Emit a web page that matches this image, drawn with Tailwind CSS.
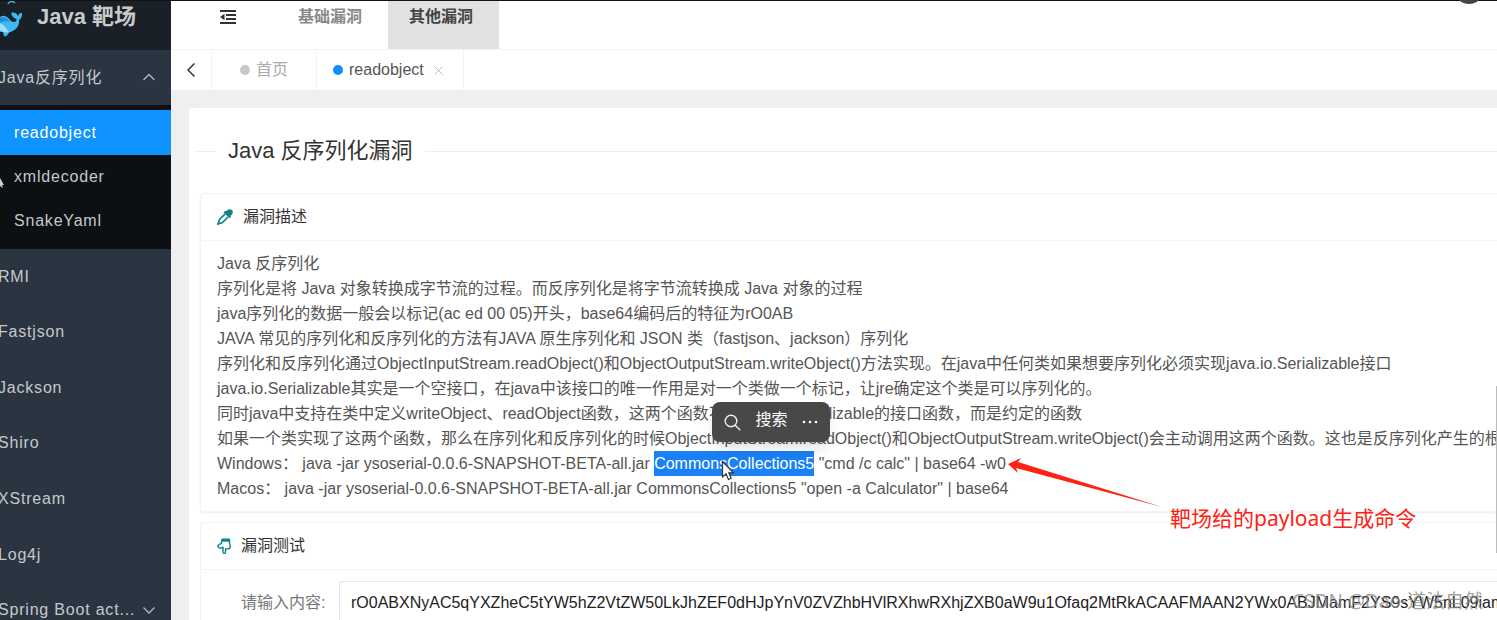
<!DOCTYPE html>
<html lang="zh-CN">
<head>
  <meta charset="UTF-8">
  <meta name="viewport" content="width=device-width, initial-scale=1.0">
  <title>Java 靶场</title>
  <script src="https://cdn.jsdelivr.net/npm/@tailwindcss/browser@4"></script>
</head>
<body class="relative h-screen overflow-hidden bg-[#efefef] font-['Liberation_Sans','Noto_Sans_CJK_SC',sans-serif] text-base text-[#555]">
  <div class="flex h-screen border-t border-[#111]">

    <!-- Sidebar -->
    <aside class="w-[171px] shrink-0 overflow-hidden bg-[#2a3541] tracking-wider text-[#c5c8cb]">
      <div class="flex h-[49px] items-start bg-[#192027]">
        <svg class="h-9 w-[23px] shrink-0" viewBox="0 0 23 36">
          <path d="M0 16C4 13 8 16 11 20C14 22 17 21 16.500 18C13 17 11 14 11.500 11.500C14 11 17 12 18 15C18.500 13 20 11.500 22 12C22.500 15 21 18 19 19C20 25 15 30 9 31.500C8 34 6 36 4 35L3 31H0Z" fill="#3fb8f2"/>
          <path d="M0 22C3 23 6 27 9 31C6 32 3 31 0 29Z" fill="#a4dcf6"/>
          <path d="M0 17C4 15 8 18 10 21C6 20 3 20 0 22Z" fill="#1f90cf"/>
          <path d="M8 3C9 0 13 0 15 2" fill="none" stroke="#3fb0ea" stroke-width="1.500"/>
        </svg>
        <h1 class="ml-[14px] text-[22px] leading-8 font-bold tracking-normal whitespace-nowrap text-[#c9c9c9]">Java 靶场</h1>
      </div>
      <nav>
        <button class="flex h-[55px] w-full items-center justify-between pr-4 tracking-wider">
          <span class="-ml-[2px] whitespace-nowrap">Java反序列化</span>
          <svg class="h-3 w-3" viewBox="0 0 12 12" fill="none" stroke="#b5b9bd" stroke-width="1.3"><path d="M0.500 8L6 2.500L11.500 8"/></svg>
        </button>
        <div class="relative h-36 bg-[#0c1013] pt-[5px]">
          <a href="#" class="block h-[45px] bg-[#0f94ff] pl-[14px] leading-[45px] text-white">readobject</a>
          <a href="#" class="block h-[44px] pl-[14px] leading-[44px]">xmldecoder</a>
          <a href="#" class="block h-[44px] pl-[14px] leading-[44px]">SnakeYaml</a>
          <svg class="absolute top-[71px] left-0 h-3 w-[5px]" viewBox="0 0 5 12"><path d="M0 2L4 9L2 9L3 12L0 10Z" fill="#ccc"/></svg>
        </div>
        <div class="-ml-[2px] grid h-[389px] grid-rows-7 items-center">
          <a href="#">RMI</a>
          <a href="#">Fastjson</a>
          <a href="#">Jackson</a>
          <a href="#">Shiro</a>
          <a href="#">XStream</a>
          <a href="#">Log4j</a>
          <a href="#" class="flex items-center justify-between pr-4 whitespace-nowrap">Spring Boot act...
            <svg class="h-3 w-3 shrink-0" viewBox="0 0 12 12" fill="none" stroke="#b5b9bd" stroke-width="1.3"><path d="M0.500 3.500L6 9L11.500 3.500"/></svg>
          </a>
        </div>
      </nav>
    </aside>

    <div class="flex min-w-0 flex-1 flex-col">
      <!-- Top menu -->
      <header class="flex h-[49px] shrink-0 border-b border-[#f3f3f3] bg-white font-bold">
        <button class="ml-[49px] flex w-[78px] items-start pt-[9px]" aria-label="menu">
          <svg class="h-[14px] w-4" viewBox="0 0 16 14" fill="#333"><path d="M0 0H16V2H0ZM6 4H16V6H6ZM6 8H16V10H6ZM0 12H16V14H0ZM0 7L4.500 3.800V10.200Z"/></svg>
        </button>
        <a href="#" class="h-12 w-[90px] leading-8 text-[#888]">基础漏洞</a>
        <a href="#" class="h-12 w-[111px] bg-[#e1e1e1] pl-[21px] leading-8 text-[#444]">其他漏洞</a>
      </header>

      <!-- Page tabs -->
      <div class="flex h-10 shrink-0 items-stretch bg-white">
        <button class="flex w-[41px] items-center justify-center border-r border-[#f3f3f3]" aria-label="back">
          <svg class="h-[14px] w-2" viewBox="0 0 8 14" fill="none" stroke="#333" stroke-width="1.500"><path d="M7.500 0.500L1 7L7.500 13.500"/></svg>
        </button>
        <a href="#" class="flex w-[105px] items-center justify-center gap-[6px] border-r border-[#f3f3f3] text-[#aaa]">
          <span class="size-[10px] rounded-full bg-[#c8c8c8]"></span>首页
        </a>
        <a href="#" class="flex w-[147px] items-center border-r border-[#f3f3f3] pl-4">
          <span class="mr-[6px] size-[10px] rounded-full bg-[#0f8fff]"></span>readobject
          <svg class="ml-[10px] size-[9px]" viewBox="0 0 9 9" stroke="#bbb"><path d="M0.500 0.500L8.500 8.500M8.500 0.500L0.500 8.500"/></svg>
        </a>
      </div>

      <!-- Content -->
      <main class="mt-[18px] ml-[18px] min-h-0 flex-1 overflow-hidden rounded-tl bg-white pt-[27px] pl-[5px]">
        <div class="flex items-center">
          <span class="h-px w-[22px] bg-[#eee]"></span>
          <h2 class="px-3 text-[22px] leading-8 text-[#333]">Java 反序列化漏洞</h2>
          <span class="h-px flex-1 bg-[#eee]"></span>
        </div>

        <section class="mt-[26px] ml-[6px] rounded-l border-y border-l border-[#f3f3f3] shadow-[0_1px_2px_#eee]">
          <h3 class="flex h-[47px] items-center border-b border-[#f5f5f5] pl-4 text-[#333]">
            <svg class="mr-[10px] size-4" viewBox="0 0 16 16"><path d="M9 2.200C11 0 13 -0.500 15 1C16.500 3 16 5 13.500 6.700L14 8L12.500 9.300L6.500 3.500L8 2Z" fill="#0d8585"/><path d="M8 5.200L2.500 10.500L1 15L5.500 13.500L11 8" fill="none" stroke="#0d8585" stroke-width="1.700"/></svg>
            漏洞描述
          </h3>
          <div class="overflow-hidden px-4 py-[10px] leading-[25px] whitespace-nowrap">
            <p>Java 反序列化</p>
            <p>序列化是将 Java 对象转换成字节流的过程。而反序列化是将字节流转换成 Java 对象的过程</p>
            <p>java序列化的数据一般会以标记(ac ed 00 05)开头，base64编码后的特征为rO0AB</p>
            <p>JAVA 常见的序列化和反序列化的方法有JAVA 原生序列化和 JSON 类（fastjson、jackson）序列化</p>
            <p>序列化和反序列化通过ObjectInputStream.readObject()和ObjectOutputStream.writeObject()方法实现。在java中任何类如果想要序列化必须实现java.io.Serializable接口</p>
            <p>java.io.Serializable其实是一个空接口，在java中该接口的唯一作用是对一个类做一个标记，让jre确定这个类是可以序列化的。</p>
            <p>同时java中支持在类中定义writeObject、readObject函数，这两个函数不是java.io.Serializable的接口函数，而是约定的函数</p>
            <p>如果一个类实现了这两个函数，那么在序列化和反序列化的时候ObjectInputStream.readObject()和ObjectOutputStream.writeObject()会主动调用这两个函数。这也是反序列化产生的根本原因</p>
            <p>Windows： java -jar ysoserial-0.0.6-SNAPSHOT-BETA-all.jar <span class="inline-block bg-[#1a80f5] text-white">CommonsCollections5</span> "cmd /c calc" | base64 -w0</p>
            <p>Macos： java -jar ysoserial-0.0.6-SNAPSHOT-BETA-all.jar CommonsCollections5 "open -a Calculator" | base64</p>
          </div>
        </section>

        <section class="mt-[10px] ml-[6px] rounded-l border-y border-l border-[#f3f3f3]">
          <h3 class="flex h-[47px] items-center border-b border-[#f5f5f5] pl-4 text-[#333]">
            <svg class="mr-2 size-4" viewBox="0 0 16 16" fill="none" stroke="#0d8585" stroke-width="1.400"><path d="M5 1.500H12.500V5.500C14 8 13.500 9 12.500 10.500L8.500 11V14.500C8 16 6 15.500 6 14V9.500L4 10C2 10.500 0.500 9 1 7.500L4.500 5Z"/><path d="M5 2.200H12.500" stroke-width="3"/></svg>
            漏洞测试
          </h3>
          <div class="flex items-center pt-[11px] pl-10">
            <label for="payload" class="w-[98px] text-[#777]">请输入内容:</label>
            <input id="payload" class="h-11 min-w-0 flex-1 rounded-l-sm border-y border-l border-[#e6e6e6] pl-[11px] text-[#222]" value="rO0ABXNyAC5qYXZheC5tYW5hZ2VtZW50LkJhZEF0dHJpYnV0ZVZhbHVlRXhwRXhjZXB0aW9u1Ofaq2MtRkACAAFMAAN2YWx0ABJMamF2YS9sYW5nL09iamVjdDt4cgATamF2YS5sYW5nLkV4Y2VwdGlvbg">
          </div>
        </section>
      </main>
    </div>
  </div>

  <!-- Selection popup -->
  <div class="absolute top-[402px] left-[712px] flex h-10 w-[118px] items-center justify-between rounded-lg bg-[#484848] px-3 text-white shadow-lg">
    <svg class="size-[17px]" viewBox="0 0 17 17" fill="none" stroke="#eee" stroke-width="1.400"><circle cx="7" cy="7" r="5.800"/><path d="M11.200 11.200L16.300 16.300"/></svg>
    <button class="pb-1">搜索</button>
    <svg class="h-1 w-4" viewBox="0 0 16 4" fill="#fff"><circle cx="2" cy="2" r="1.300"/><circle cx="8" cy="2" r="1.300"/><circle cx="14" cy="2" r="1.300"/></svg>
  </div>
  <svg class="absolute top-[460px] left-[721px] h-[21px] w-[14px]" viewBox="0 0 14 21"><path d="M1.500 1.500V17L5 13.800L7.500 19.500L10.200 18.300L7.800 12.800H12.500Z" fill="#fff" stroke="#333" stroke-width="1.200"/></svg>

  <!-- Annotation -->
  <svg class="absolute top-[456px] left-[1008px] h-[52px] w-[154px]" viewBox="0 0 154 52"><path d="M0 8L13 2L10 6L154 51L8 12L10 17Z" fill="#fd2214"/></svg>
  <p class="absolute top-[502px] left-[1170px] font-['Noto_Sans','Noto_Sans_CJK_SC',sans-serif] text-[21px] leading-8 whitespace-nowrap text-[#fd2214]">靶场给的payload生成命令</p>

  <p class="absolute right-[14px] bottom-[7px] font-['Noto_Sans','Noto_Sans_CJK_SC',sans-serif] text-[19px] leading-6 whitespace-nowrap text-[#888]/80">CSDN @Dao-道法自然</p>
  <span class="absolute -top-[26px] right-[13px] size-[30px] rounded-full bg-[#444]"></span>
  <span class="absolute top-[386px] right-0 h-[167px] w-px bg-[#bbb]"></span>
</body>
</html>
